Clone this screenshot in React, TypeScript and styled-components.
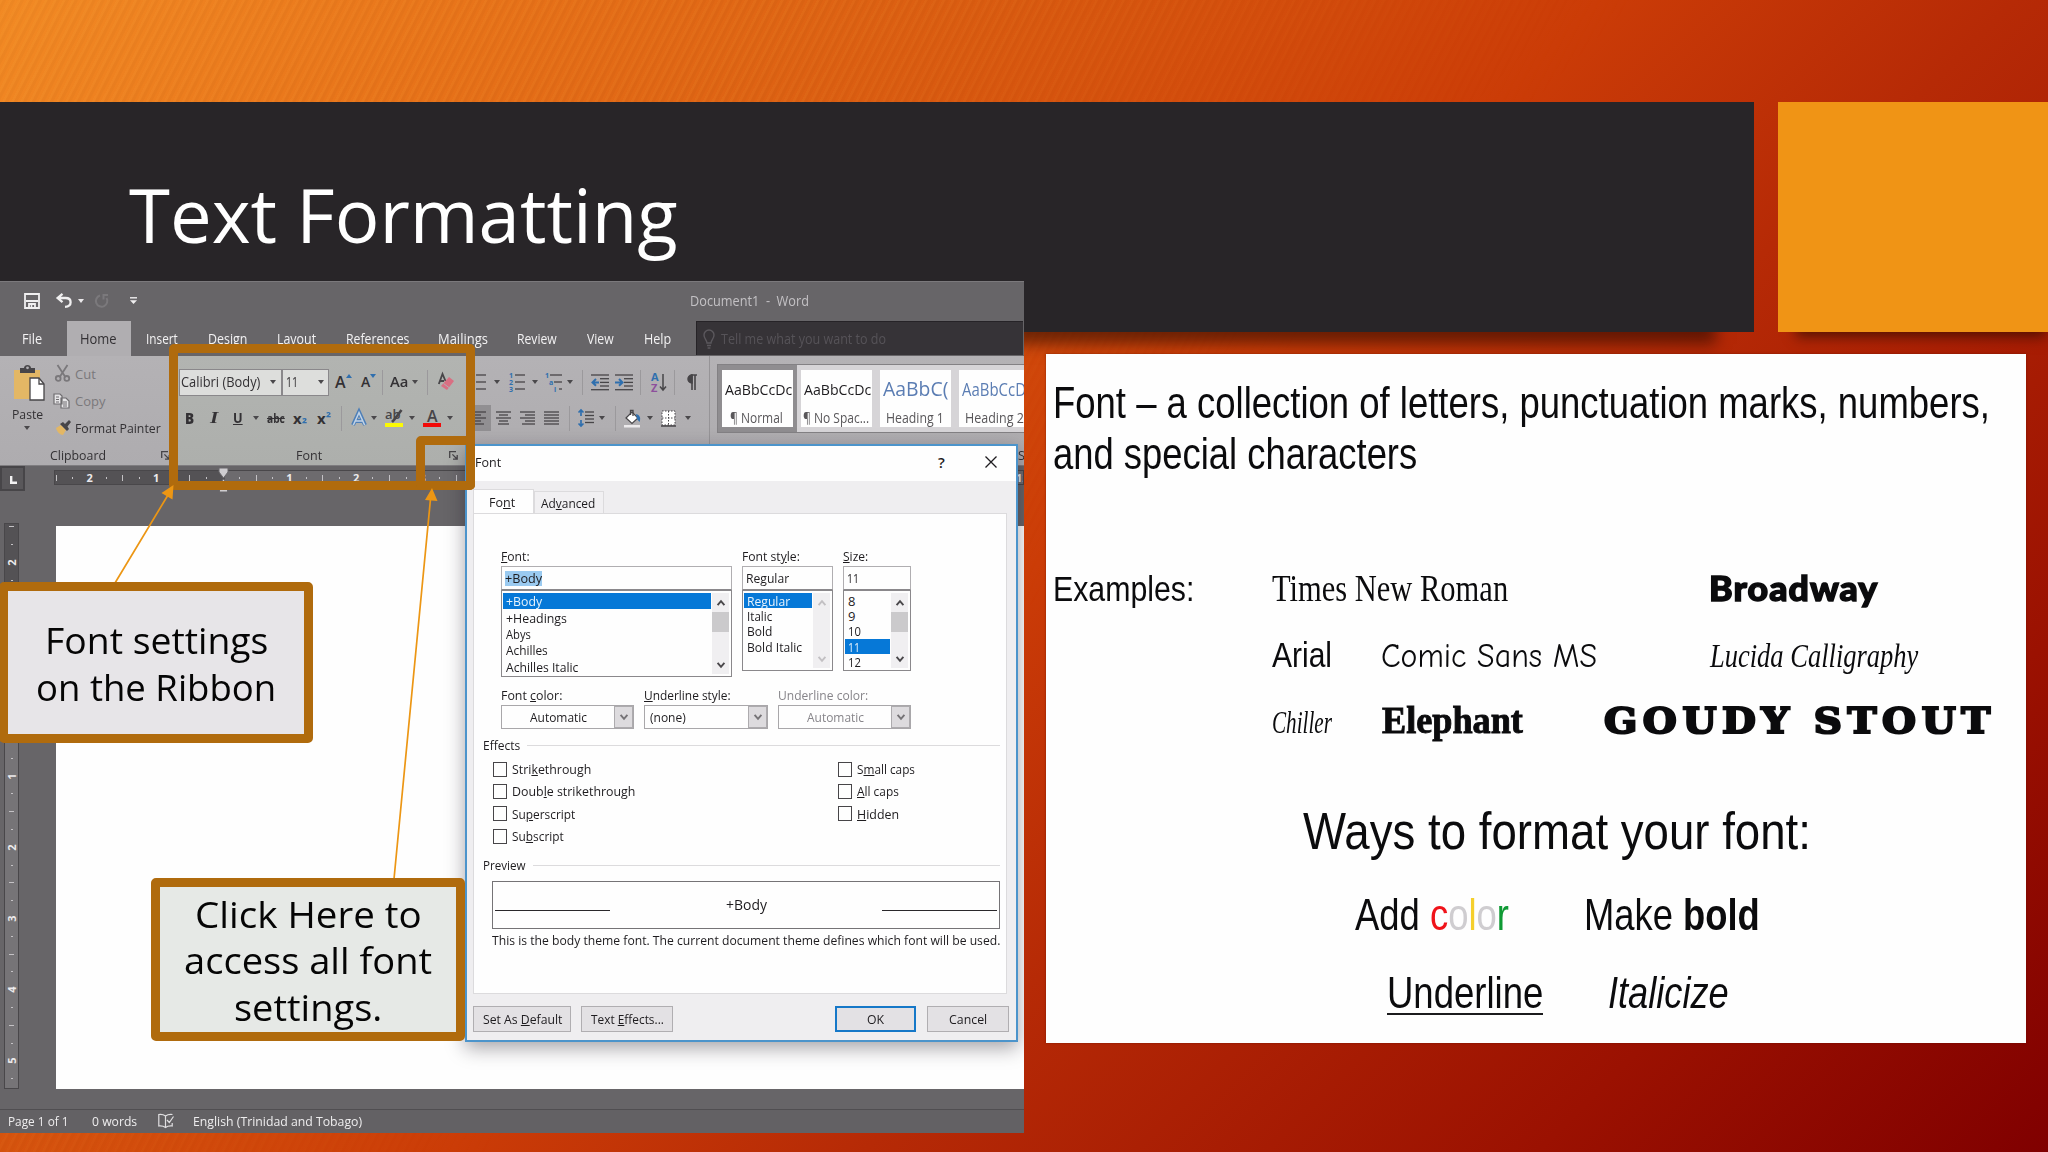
import React, { useLayoutEffect, useRef, useState } from 'react';
import styled, { createGlobalStyle, css } from 'styled-components';

const ui = `"Open Sans", "Noto Sans", sans-serif`;
const arial = `"Liberation Sans", Arial, sans-serif`;

const Global = createGlobalStyle`
  *, *::before, *::after { box-sizing: border-box; }
  body { margin: 0; font-family: ${ui}; }
  svg { display: block; flex: none; overflow: visible; }
`;

/* ---------- text set to an exact measure ---------- */

const Measure = styled.span<{ $w: number; $ml?: number; $c?: string; $fs?: number; $ff?: string; $b?: number; $i?: boolean; $lh?: number }>`
  display: block;
  flex: none;
  width: ${p => p.$w}px;
  margin-left: ${p => p.$ml ?? 0}px;
  white-space: pre;
  ${p => p.$c && css`color: ${p.$c};`}
  ${p => p.$fs && css`font-size: ${p.$fs}px;`}
  ${p => p.$ff && css`font-family: ${p.$ff};`}
  ${p => p.$b && css`font-weight: ${p.$b};`}
  ${p => p.$i && css`font-style: italic;`}
  ${p => p.$lh && css`line-height: ${p.$lh}px;`}
`;
const Run = styled.span`
  display: inline-block;
  transform-origin: 0 50%;
`;

type FitProps = { w: number; ml?: number; c?: string; fs?: number; ff?: string; b?: number; i?: boolean; lh?: number; children: React.ReactNode };

function Fit({ w, ml, c, fs, ff, b, i, lh, children }: FitProps) {
  const ref = useRef<HTMLSpanElement>(null);
  const [scale, setScale] = useState(1);
  useLayoutEffect(() => {
    if (ref.current) setScale(w / ref.current.offsetWidth);
  }, [w]);
  return (
    <Measure $w={w} $ml={ml} $c={c} $fs={fs} $ff={ff} $b={b} $i={i} $lh={lh}>
      <Run ref={ref} style={{ transform: `scaleX(${scale})` }}>{children}</Run>
    </Measure>
  );
}

/* ---------- slide ---------- */

const Slide = styled.div`
  position: relative;
  isolation: isolate;
  width: 2048px;
  height: 1152px;
  padding-top: 102px;
  overflow: hidden;
  display: flex;
  flex-direction: column;
  background: linear-gradient(135deg, #f28a24 0%, #e77219 16%, #d95a10 32%, #cb3c07 50%, #b62a06 63%, #9b1101 84%, #800000 100%);
  &::before {
    content: '';
    position: absolute;
    inset: 0;
    z-index: -1;
    background: repeating-linear-gradient(117deg, rgba(255, 200, 90, 0.06) 0 2px, rgba(0, 0, 0, 0.02) 3px 5px, transparent 6px 8px);
    mask-image: linear-gradient(135deg, #000 25%, transparent 52%);
  }
`;
const Header = styled.header`
  display: flex;
  gap: 24px;
  height: 230px;
  flex: none;
`;
const TitleBand = styled.div`
  width: 1754px;
  padding: 67px 0 0 129px;
  background: #282528;
  color: #fff;
  box-shadow: -24px 26px 14px -14px rgba(30, 8, 0, 0.55);
`;
const Accent = styled.div`
  flex: 1;
  background: #f09415;
  box-shadow: 8px 15px 12px -10px rgba(30, 8, 0, 0.6);
`;
const Body = styled.main`
  display: flex;
  align-items: flex-start;
`;

/* ---------- word window ---------- */

const Word = styled.section`
  position: relative;
  width: 1024px;
  height: 852px;
  margin-top: -51px;
  flex: none;
  display: flex;
  flex-direction: column;
  overflow: hidden;
  background: #676568;
  font-size: 13px;
  font-weight: 500;
  line-height: 18px;
  color: #333134;
`;
const TitleBar = styled.div`
  height: 40px;
  display: flex;
  align-items: center;
  padding: 0 0 2px 24px;
  border-top: 1px solid #7b797c;
  font-size: 14px;
  font-weight: 400;
`;
const Tabs = styled.nav`
  height: 35px;
  display: flex;
  align-items: center;
  font-size: 14px;
  color: #f3f2f3;
`;
const HomeTab = styled.div`
  width: 64px;
  height: 35px;
  margin-left: 25px;
  display: flex;
  align-items: center;
  background: #b0aeb1;
  color: #333134;
`;
const Search = styled.div`
  width: 327px;
  height: 34px;
  margin-left: 25px;
  align-self: flex-start;
  display: flex;
  align-items: center;
  padding-left: 6px;
  background: #363337;
  border: solid #262327;
  border-width: 1px 0 0 1px;
  color: #565358;
`;
const Ribbon = styled.div`
  height: 109px;
  display: flex;
  background: linear-gradient(#b4b2b5, #aeacaf);
`;
const Group = styled.div<{ $w: number }>`
  width: ${p => p.$w}px;
  flex: none;
  display: flex;
  flex-direction: column;
`;
const FontGroup = styled(Group)`
  background: linear-gradient(#b2b4b1, #adafac);
`;
const Tools = styled.div<{ $first?: boolean }>`
  height: 36px;
  display: flex;
  align-items: center;
  margin-top: ${p => (p.$first ? 8 : 0)}px;
`;
const GroupLabel = styled.div`
  height: 20px;
  margin-top: auto;
  display: flex;
  align-items: center;
`;
const ClipboardBody = styled.div`
  display: flex;
  padding-top: 4px;
`;
const PasteColumn = styled.div`
  width: 53px;
  display: flex;
  flex-direction: column;
  padding: 5px 0 0 12px;
  gap: 3px;
`;
const ClipRow = styled.div`
  display: flex;
  align-items: center;
  height: 27px;
`;
const Combo = styled.div<{ $w: number }>`
  width: ${p => p.$w}px;
  height: 27px;
  display: flex;
  align-items: center;
  border: 1px solid #8a888b;
  background: #dddedc;
  font-size: 14px;
`;
const Sep = styled.i<{ $ml: number }>`
  width: 1px;
  height: 25px;
  margin-left: ${p => p.$ml}px;
  background: #9b999c;
`;
const Caret = styled.i<{ $ml: number; $c?: string }>`
  width: 0;
  height: 0;
  flex: none;
  margin-left: ${p => p.$ml}px;
  border: solid transparent;
  border-width: 4px 3px 0;
  border-top-color: ${p => p.$c ?? '#4a484b'};
`;
const Pic = styled.span<{ $ml?: number; $bg?: boolean }>`
  display: flex;
  flex: none;
  margin-left: ${p => p.$ml ?? 0}px;
  ${p => p.$bg && css`background: #918f92; padding: 5px 4px 5px 2px;`}
`;
const StylesGroup = styled(Group)`
  border-left: 1px solid #969497;
  padding: 8px 0 0 7px;
  overflow: hidden;
`;
const Gallery = styled.div`
  display: flex;
  width: 320px;
  height: 69px;
  border: 1px solid #838184;
  border-right: 0;
  background: #d6d4d7;
`;
const StyleTile = styled.div<{ $on?: boolean }>`
  width: 79px;
  height: 67px;
  flex: none;
  padding: 5px 4px;
  background: ${p => (p.$on ? '#8f8d90' : 'transparent')};
`;
const TileFace = styled.div`
  height: 57px;
  display: flex;
  flex-direction: column;
  background: #fefefe;
  overflow: hidden;
`;

const RulerRow = styled.div`
  height: 26px;
  display: flex;
  flex: none;
  border-top: 1px solid #7f7d80;
`;
const Corner = styled.div`
  width: 25px;
  height: 25px;
  padding: 8px 0 0 8px;
  background: #59575a;
  border: 2px solid #474548;
`;
const HRuler = styled.div`
  width: 970px;
  height: 15px;
  margin: 4px 0 0 29px;
  display: flex;
  overflow: hidden;
  border: 1px solid #49474a;
  background: linear-gradient(90deg, #545255 170px, #6d6b6e 170px);
`;
const VRuler = styled.div`
  width: 15px;
  height: 566px;
  margin: 32px 37px 0 4px;
  overflow: hidden;
  border: 1px solid #49474a;
  background: linear-gradient(#545255 182px, #767477 182px);
`;
const Cell = styled.div<{ $v?: boolean; $lead?: boolean }>`
  flex: none;
  display: flex;
  align-items: center;
  justify-content: center;
  font: bold 11px/13px ${ui};
  color: #eceaec;
  ${p => (p.$v
    ? css`height: 17.8px; width: 13px; margin-top: ${p.$lead ? -6 : 0}px;`
    : css`width: 16.67px; height: 13px; margin-left: ${p.$lead ? -7 : 0}px;`)}
`;
const Turn = styled.span`
  transform: rotate(-90deg);
`;
const Tick = styled.i<{ $v?: boolean; $long?: boolean }>`
  background: #c4c2c5;
  width: ${p => (p.$v ? (p.$long ? 5 : 2) : 1)}px;
  height: ${p => (p.$v ? 1 : p.$long ? 6 : 2)}px;
`;
const Workspace = styled.div`
  flex: 1;
  display: flex;
`;
const Page = styled.div`
  width: 968px;
  height: 563px;
  margin-top: 35px;
  background: #fefefe;
`;
const StatusBar = styled.footer`
  height: 24px;
  flex: none;
  display: flex;
  align-items: center;
  padding: 0 0 2px 8px;
  border-top: 1px solid #504e51;
  background: #636164;
  color: #eeedee;
`;

/* ---------- font dialog ---------- */

const Dialog = styled.div`
  position: absolute;
  left: 465px;
  top: 163px;
  width: 553px;
  height: 598px;
  display: flex;
  flex-direction: column;
  border: 2px solid #4c94cb;
  background: #efeef0;
  box-shadow: 0 6px 18px rgba(20, 15, 30, 0.38);
  color: #1e1c1f;
  font-size: 13px;
`;
const DialogTitle = styled.div`
  height: 35px;
  display: flex;
  align-items: center;
  padding-bottom: 3px;
  background: #fefefe;
`;
const DialogTabs = styled.div`
  display: flex;
  align-items: flex-end;
  height: 32px;
  padding: 8px 0 0 6px;
`;
const DialogTab = styled.div<{ $on?: boolean; $w: number }>`
  width: ${p => p.$w}px;
  height: ${p => (p.$on ? 25 : 22)}px;
  margin-bottom: ${p => (p.$on ? -1 : 0)}px;
  display: flex;
  align-items: center;
  border: 1px solid #dcdbdd;
  border-bottom: 0;
  background: ${p => (p.$on ? '#fefefe' : '#f1f0f2')};
`;
const Panel = styled.div`
  width: 534px;
  height: 481px;
  margin-left: 6px;
  padding: 33px 6px 0 9px;
  display: flex;
  flex-direction: column;
  border: 1px solid #dcdbdd;
  background: #fefefe;
`;
const Fields = styled.div<{ $mt?: number }>`
  display: flex;
  align-items: flex-start;
  gap: 10px;
  margin: ${p => p.$mt ?? 0}px 0 0 18px;
`;
const Field = styled.div<{ $w: number; $dim?: boolean }>`
  width: ${p => p.$w}px;
  display: flex;
  flex-direction: column;
  color: ${p => (p.$dim ? '#87858a' : 'inherit')};
`;
const Entry = styled.div`
  height: 24px;
  margin-top: 1px;
  padding-left: 3px;
  display: flex;
  align-items: center;
  border: 1px solid #b0aeb1;
  border-bottom-color: #8a888b;
`;
const Selected = styled.span`
  height: 15px;
  display: flex;
  align-items: center;
  background: #9acaf0;
`;
const List = styled.div<{ $h: number }>`
  height: ${p => p.$h}px;
  display: flex;
  justify-content: space-between;
  padding: 2px 2px 2px 1px;
  border: 1px solid #8a888b;
`;
const Options = styled.div`
  flex: 1;
`;
const Option = styled.div<{ $h: number; $on?: boolean }>`
  height: ${p => p.$h}px;
  display: flex;
  align-items: center;
  padding-left: 3px;
  background: ${p => (p.$on ? '#0678d7' : 'transparent')};
  color: ${p => (p.$on ? '#e8f3fc' : 'inherit')};
`;
const Scroll = styled.div`
  width: 17px;
  margin-left: 1px;
  display: flex;
  flex-direction: column;
  align-items: center;
  justify-content: space-between;
  background: #f0eff1;
  padding: 7px 0 6px;
`;
const Thumb = styled.i`
  width: 17px;
  height: 20px;
  margin: 6px 0 auto;
  background: #cbcacc;
`;
const Drop = styled.div`
  height: 24px;
  margin-top: 1px;
  display: flex;
  align-items: center;
  justify-content: space-between;
  border: 1px solid #a9a7aa;
`;
const DropButton = styled.span`
  width: 19px;
  height: 22px;
  display: flex;
  align-items: center;
  justify-content: center;
  border: 1px solid #adabae;
  background: #dddbde;
`;
const Legend = styled.div<{ $mt: number }>`
  display: flex;
  align-items: center;
  gap: 7px;
  margin-top: ${p => p.$mt}px;
  &::after {
    content: '';
    flex: 1;
    height: 1px;
    background: #dcdbdd;
  }
`;
const Checks = styled.div`
  display: grid;
  grid-template-columns: 345px 1fr;
  grid-auto-rows: 22.3px;
  margin: 4px 0 0 10px;
`;
const Check = styled.label<{ $col: number; $row: number }>`
  grid-column: ${p => p.$col};
  grid-row: ${p => p.$row};
  display: flex;
  align-items: center;
  gap: 5px;
  &::before {
    content: '';
    width: 14px;
    height: 15px;
    border: 1px solid #474548;
  }
`;
const PreviewBox = styled.div`
  height: 48px;
  margin: 7px 0 2px 9px;
  padding: 0 2px 2px;
  display: flex;
  align-items: center;
  justify-content: space-between;
  border: 1px solid #757376;
`;
const Rule = styled.i`
  width: 115px;
  height: 1px;
  margin-top: 13px;
  background: #2a282b;
`;
const Buttons = styled.div`
  display: flex;
  margin: 12px 0 0 6px;
`;
const Button = styled.button<{ $w: number; $ml?: number; $primary?: boolean }>`
  width: ${p => p.$w}px;
  height: 26px;
  margin: 0 0 0 ${p => p.$ml ?? 0}px;
  padding: 0;
  display: flex;
  align-items: center;
  justify-content: center;
  border: ${p => (p.$primary ? '2px solid #1678c8' : '1px solid #b0aeb1')};
  background: #e3e1e4;
  font: 500 13px/18px ${ui};
  color: #1e1c1f;
`;

/* ---------- annotations over the window ---------- */

const Frame = styled.div<{ $x: number; $y: number; $w: number; $h: number }>`
  position: absolute;
  left: ${p => p.$x}px;
  top: ${p => p.$y}px;
  width: ${p => p.$w}px;
  height: ${p => p.$h}px;
  border: 9px solid #b06b0d;
  border-radius: 5px;
`;
const Callout = styled(Frame)<{ $bg: string }>`
  display: flex;
  flex-direction: column;
  align-items: center;
  justify-content: center;
  padding-top: 2px;
  background: ${p => p.$bg};
  background-clip: padding-box;
  color: #050505;
  font-size: 37px;
  line-height: 46.4px;
`;
const Arrows = styled.svg`
  position: absolute;
  left: 0;
  top: 0;
`;

/* ---------- example card ---------- */

const Card = styled.section`
  width: 980px;
  height: 689px;
  margin: 22px 0 0 22px;
  padding: 23px 0 0 7px;
  background: #fefefe;
  color: #0b0b0d;
  font-family: ${arial};
  box-shadow: 0 0 2px rgba(90, 20, 0, 0.6);
`;
const Line = styled.div<{ $h: number; $fs: number; $mt?: number }>`
  height: ${p => p.$h}px;
  margin-top: ${p => p.$mt ?? 0}px;
  display: flex;
  align-items: baseline;
  font-size: ${p => p.$fs}px;
  &::before {
    content: '\\200b';
    width: 0;
    font: ${p => p.$fs}px/${p => p.$h}px ${arial};
  }
`;
const Ink = styled.span<{ $c: string }>`
  color: ${p => p.$c};
`;
const Underlined = styled.span`
  border-bottom: 2px solid #1b1b1d;
  display: inline-block;
  line-height: 41px;
`;
const Heavy = styled.span<{ $s: number; $ls?: number }>`
  -webkit-text-stroke: ${p => p.$s}px #0b0b0d;
  letter-spacing: ${p => p.$ls ?? 0}px;
`;

/* ---------- drawings ---------- */

const dark = '#474548';
const blue = '#2f6fae';

const Chevron = ({ up, c = '#4a484b', s = 8 }: { up?: boolean; c?: string; s?: number }) => (
  <svg width={s} height={6} viewBox="0 0 8 6">
    <path d={up ? 'M.6 5.2L4 1.2L7.4 5.2' : 'M.6 .8L4 4.8L7.4 .8'} fill="none" stroke={c} strokeWidth="1.9" />
  </svg>
);
const Launcher = () => (
  <svg width="9" height="9" viewBox="0 0 9 9" fill="none" stroke={dark} strokeWidth="1.3">
    <path d="M.7 7V.7H7M3.4 3.4L8 8M8.2 4V8.2H4" />
  </svg>
);
const lines = (rows: number[][]) => rows.map(([a, b, y]) => <path key={y} d={`M${a} ${y}H${b}`} stroke={dark} strokeWidth="1.3" />);
const Align = ({ rows }: { rows: number[][] }) => <svg width="15" height="16" viewBox="0 0 15 16">{lines(rows)}</svg>;

const hMarks = Array.from({ length: 59 }, (_, k) => k - 10);
const vMarks = Array.from({ length: 32 }, (_, k) => k - 10);

function Mark({ k, v }: { k: number; v?: boolean }) {
  if (k === 0) return null;
  if (k % 4 === 0) return v ? <Turn>{Math.abs(k / 4)}</Turn> : <>{Math.abs(k / 4)}</>;
  return <Tick $v={v} $long={k % 2 === 0} />;
}

const H = ({ children }: { children: React.ReactNode }) => <u>{children}</u>;

export default function App() {
  return (
    <Slide>
      <Global />
      <Header>
        <TitleBand><Fit w={549} fs={75} b={500} lh={90}>Text Formatting</Fit></TitleBand>
        <Accent />
      </Header>
      <Body>
        <Word>
          <TitleBar>
            <svg width="16" height="16" viewBox="0 0 16 16" fill="none" stroke="#f0eff0" strokeWidth="1.8">
              <path d="M1 1H15V15H1ZM2 8H14M5 15V11H11V15" /><path d="M7.5 12V15" strokeWidth="1.6" />
            </svg>
            <Pic $ml={16}>
              <svg width="16" height="15" viewBox="0 0 16 15" fill="none" stroke="#f0eff0" strokeWidth="2.3">
                <path d="M6.5 .8L1.6 5L6.5 9.2M2 5H9.5C13 5 14.6 7 14.6 9.2C14.6 12 12.5 13.6 9 13.8" />
              </svg>
            </Pic>
            <Caret $ml={6} $c="#eceaec" />
            <Pic $ml={11}>
              <svg width="14" height="14" viewBox="0 0 14 14" fill="none" stroke="#7b797c" strokeWidth="2">
                <path d="M5 1.5A5.7 5.7 0 1 0 11.5 4M13 1H8.5V5.5" />
              </svg>
            </Pic>
            <Pic $ml={21}>
              <svg width="7" height="8" viewBox="0 0 7 8"><path d="M0 .8H7" stroke="#f0eff0" strokeWidth="1.4" /><path d="M0 3.2H7L3.5 7Z" fill="#f0eff0" /></svg>
            </Pic>
            <Fit w={119} ml={553} c="#c3c1c4">{'Document1  -  Word'}</Fit>
          </TitleBar>
          <Tabs>
            <Fit w={20} ml={22}>File</Fit>
            <HomeTab><Fit w={37} ml={13}>Home</Fit></HomeTab>
            <Fit w={32} ml={15}>Insert</Fit>
            <Fit w={39} ml={30}>Design</Fit>
            <Fit w={39} ml={30}>Layout</Fit>
            <Fit w={63} ml={30}>References</Fit>
            <Fit w={50} ml={29}>Mailings</Fit>
            <Fit w={40} ml={29}>Review</Fit>
            <Fit w={27} ml={30}>View</Fit>
            <Fit w={27} ml={30}>Help</Fit>
            <Search>
              <svg width="12" height="20" viewBox="0 0 12 20" fill="none" stroke="#5b585d" strokeWidth="1.4">
                <path d="M4 14C4 11 1 10 1 6A5 5 0 0 1 11 6C11 10 8 11 8 14ZM4 16.5H8M4.6 19H7.4" />
              </svg>
              <Fit w={165} ml={6}>Tell me what you want to do</Fit>
            </Search>
          </Tabs>
          <Ribbon>
            <Group $w={174}>
              <ClipboardBody>
                <PasteColumn>
                  <svg width="33" height="37" viewBox="0 0 33 37">
                    <path d="M2 5H28V34H2Z" fill="#e3b765" />
                    <path d="M8 3H12C12-1 19-1 19 3H23V8H8Z" fill={dark} /><circle cx="15.5" cy="2.8" r="1.4" fill="#b0aeb1" />
                    <path d="M18 13H27L32 19V35H18Z" fill="#fff" stroke={dark} strokeWidth="1.3" /><path d="M27 13V19H32" fill="none" stroke={dark} strokeWidth="1.3" />
                  </svg>
                  <Fit w={31}>Paste</Fit>
                  <Caret $ml={12} />
                </PasteColumn>
                <div>
                  <ClipRow>
                    <Pic $ml={2}><svg width="15" height="17" viewBox="0 0 15 17" fill="none" stroke="#7a787b" strokeWidth="1.8">
                      <path d="M2.5 0L10 11.5M12.5 0L5 11.5" /><circle cx="3.2" cy="13.4" r="2.4" /><circle cx="11.8" cy="13.4" r="2.4" />
                    </svg></Pic>
                    <Fit w={21} ml={5} c="#7a787b">Cut</Fit>
                  </ClipRow>
                  <ClipRow>
                    <svg width="17" height="16" viewBox="0 0 17 16" fill="#e6e5e7" stroke="#6f6d70" strokeWidth="1.2">
                      <path d="M1 1H7L9 3V11H1ZM8 5H13L16 8V15H8Z" /><path d="M3 4H6M3 6.5H6M3 9H6M10 9H14M10 11H14M10 13H14" />
                    </svg>
                    <Fit w={30} ml={5} c="#7a787b">Copy</Fit>
                  </ClipRow>
                  <ClipRow>
                    <Pic $ml={3}><svg width="16" height="16" viewBox="0 0 16 16">
                      <path d="M0 8L5 5L10 10L7 15C4 15 1 12 0 8Z" fill="#e3b765" /><path d="M4 4L7 2L9 4L13 0L15 2L11.5 6.5L13 9L11 11Z" fill={dark} />
                    </svg></Pic>
                    <Fit w={86} ml={3}>Format Painter</Fit>
                  </ClipRow>
                </div>
              </ClipboardBody>
              <GroupLabel><Fit w={56} ml={50}>Clipboard</Fit><Pic $ml={55}><Launcher /></Pic></GroupLabel>
            </Group>

            <FontGroup $w={291}>
              <Tools $first>
                <Pic $ml={5}><Combo $w={103}><Fit w={79} ml={1}>Calibri (Body)</Fit><Caret $ml={10} /></Combo></Pic>
                <Combo $w={47}><Fit w={12} ml={3}>11</Fit><Caret $ml={20} /></Combo>
                <Fit w={11} ml={6} fs={16} b={600}>A</Fit>
                <svg width="6" height="20" viewBox="0 0 6 20"><path d="M0 6L3 2L6 6Z" fill={blue} /></svg>
                <Fit w={9} ml={9} fs={14} b={600} lh={24}>A</Fit>
                <svg width="6" height="20" viewBox="0 0 6 20"><path d="M0 2H6L3 6Z" fill={blue} /></svg>
                <Sep $ml={6} />
                <Fit w={18} ml={7} fs={14} b={600}>Aa</Fit>
                <Caret $ml={4} />
                <Sep $ml={9} />
                <Pic $ml={10}><svg width="17" height="19" viewBox="0 0 17 19">
                  <path d="M.8 11L4.5 1L7.5 8M2 8H6" fill="none" stroke={dark} strokeWidth="1.8" /><path d="M3 13L11 4L16 8L9 17Z" fill="#d96f83" /><path d="M5.5 10.5L11.5 15" stroke="#b0aeb1" />
                </svg></Pic>
              </Tools>
              <Tools>
                <Fit w={9} ml={11} fs={15} b={800}>B</Fit>
                <Fit w={8} ml={16} fs={16} b={700} i ff={`"Liberation Serif", serif`}>I</Fit>
                <Fit w={10} ml={15} fs={14} b={700}><H>U</H></Fit>
                <Caret $ml={10} />
                <Fit w={18} ml={8} fs={13} b={700}><s>abc</s></Fit>
                <Fit w={9} ml={8} fs={15} b={700}>x</Fit>
                <Fit w={5} fs={11} c={blue} b={700} lh={24}>{'\u2082'}</Fit>
                <Fit w={9} ml={10} fs={15} b={700}>x</Fit>
                <Fit w={5} fs={11} c={blue} b={700} lh={10}>{'\u00b2'}</Fit>
                <Sep $ml={10} />
                <Pic $ml={9}><svg width="16" height="17" viewBox="0 0 16 17">
                  <path d="M2 15L8 2L14 15M4.5 11H11.5" fill="none" stroke="#4d7fb8" strokeWidth="4" /><path d="M2.4 15L8 2.6L13.6 15M4.5 11H11.5" fill="none" stroke="#c3d4e6" strokeWidth="1.5" />
                </svg></Pic>
                <Caret $ml={4} />
                <Pic $ml={8}><svg width="18" height="20" viewBox="0 0 18 20">
                  <text x="0" y="11" fontSize="13" fontWeight="600" fill={dark}>ab</text><path d="M16.5 2L9 12L7 14" stroke={dark} strokeWidth="2.6" /><path d="M0 15H18V19H0Z" fill="#fbf905" />
                </svg></Pic>
                <Caret $ml={6} />
                <Pic $ml={8}><svg width="18" height="20" viewBox="0 0 18 20">
                  <text x="4" y="13.5" fontSize="16" fontWeight="600" fill={dark}>A</text><path d="M0 15H18V19H0Z" fill="#f20a08" />
                </svg></Pic>
                <Caret $ml={6} />
              </Tools>
              <GroupLabel><Fit w={26} ml={122}>Font</Fit><Pic $ml={127}><Launcher /></Pic></GroupLabel>
            </FontGroup>

            <Group $w={244}>
              <Tools $first>
                <Pic $ml={7}><Align rows={[[4, 14, 1], [4, 14, 8], [4, 14, 15]]} /></Pic>
                <Caret $ml={7} />
                <Pic $ml={9}><svg width="16" height="18" viewBox="0 0 16 18">{lines([[6, 16, 2], [6, 16, 9], [6, 16, 16]])}<g fill={blue} fontSize="7" fontWeight="700"><text y="5">1</text><text y="12">2</text><text y="19">3</text></g></svg></Pic>
                <Caret $ml={7} />
                <Pic $ml={7}><svg width="18" height="18" viewBox="0 0 18 18">{lines([[5, 17, 2], [9, 17, 9], [14, 17, 16]])}<g fill={blue} fontSize="7" fontWeight="700"><text y="5">1</text><text x="4" y="12">a</text><text x="9" y="19">i</text></g></svg></Pic>
                <Caret $ml={4} />
                <Sep $ml={9} />
                <Pic $ml={8}><svg width="18" height="17" viewBox="0 0 18 17">{lines([[0, 18, 1], [9, 18, 4.7], [9, 18, 8.4], [9, 18, 12], [0, 18, 15.7]])}<path d="M8 8.4H2M5 5L1.5 8.4L5 11.8" fill="none" stroke={blue} strokeWidth="2" /></svg></Pic>
                <Pic $ml={6}><svg width="18" height="17" viewBox="0 0 18 17">{lines([[0, 18, 1], [9, 18, 4.7], [9, 18, 8.4], [9, 18, 12], [0, 18, 15.7]])}<path d="M0 8.4H7M4 5L7.5 8.4L4 11.8" fill="none" stroke={blue} strokeWidth="2" /></svg></Pic>
                <Sep $ml={7} />
                <Pic $ml={10}><svg width="15" height="19" viewBox="0 0 15 19"><g fontSize="11" fontWeight="700"><text y="8" fill={blue}>A</text><text y="18.5" fill="#8d4f9c">Z</text></g><path d="M12 1V17M9 13.5L12 17L15 13.5" fill="none" stroke={dark} strokeWidth="1.5" /></svg></Pic>
                <Sep $ml={8} />
                <Pic $ml={11}><svg width="11" height="15" viewBox="0 0 11 15"><path d="M5 0H11M6 0V15M9 0V15" stroke={dark} strokeWidth="1.6" /><path d="M6 0A4 4 0 0 0 6 8Z" fill={dark} stroke={dark} strokeWidth="1.5" /></svg></Pic>
              </Tools>
              <Tools>
                <Pic $ml={5} $bg><Align rows={[[0, 14, 2], [0, 9, 5], [0, 14, 8], [0, 9, 11], [0, 12, 14]]} /></Pic>
                <Pic $ml={5}><Align rows={[[0, 15, 2], [3, 12, 5], [0, 15, 8], [3, 12, 11], [2, 13, 14]]} /></Pic>
                <Pic $ml={9}><Align rows={[[0, 15, 2], [5, 15, 5], [0, 15, 8], [5, 15, 11], [2, 15, 14]]} /></Pic>
                <Pic $ml={9}><Align rows={[[0, 15, 2], [0, 15, 5], [0, 15, 8], [0, 15, 11], [0, 15, 14]]} /></Pic>
                <Sep $ml={10} />
                <Pic $ml={8}><svg width="16" height="18" viewBox="0 0 16 18">{lines([[7, 16, 3], [7, 16, 6.5], [7, 16, 10], [7, 16, 13.5]])}<path d="M3 1V7M.5 3.5L3 1L5.5 3.5M3 11V17M.5 14.5L3 17L5.5 14.5" fill="none" stroke={blue} strokeWidth="1.7" /></svg></Pic>
                <Caret $ml={5} />
                <Sep $ml={10} />
                <Pic $ml={8}><svg width="17" height="19" viewBox="0 0 17 19"><path d="M2 9L8 3L14 9L8 14.5Z" fill="#fff" stroke={dark} strokeWidth="1.2" /><path d="M6.5 6V1.5H9V7" fill="none" stroke={dark} strokeWidth="1.3" /><path d="M12 5C16 6 17 9 15.5 13L13 10Z" fill={blue} /><path d="M0 16H16V18.5H0Z" fill="#eceaec" /></svg></Pic>
                <Caret $ml={6} />
                <Pic $ml={8}><svg width="15" height="17" viewBox="0 0 15 17"><path d="M1 1H14V15H1Z" fill="#fff" stroke={dark} strokeWidth="1" strokeDasharray="1.5 1.5" /><path d="M7.5 1V15M1 8H14" stroke={dark} strokeDasharray="1.5 1.5" /><path d="M0 16H15" stroke={dark} strokeWidth="1.5" /></svg></Pic>
                <Caret $ml={9} />
              </Tools>
            </Group>

            <StylesGroup $w={315}>
              <Gallery>
                <StyleTile $on><TileFace>
                  <Fit w={67} ml={3} fs={15} lh={38} c="#1e1c1f">AaBbCcDc</Fit><Fit w={53} ml={8} fs={14} lh={19} c="#59575a">¶ Normal</Fit>
                </TileFace></StyleTile>
                <StyleTile><TileFace>
                  <Fit w={67} ml={3} fs={15} lh={38} c="#1e1c1f">AaBbCcDc</Fit><Fit w={66} ml={2} fs={14} lh={19} c="#59575a">¶ No Spac...</Fit>
                </TileFace></StyleTile>
                <StyleTile><TileFace>
                  <Fit w={65} ml={3} fs={20} b={400} lh={38} c="#5b7db3">AaBbC(</Fit><Fit w={58} ml={6} fs={14} lh={19} c="#59575a">Heading 1</Fit>
                </TileFace></StyleTile>
                <StyleTile><TileFace>
                  <Fit w={64} ml={3} fs={18} b={400} lh={38} c="#5b7db3">AaBbCcD</Fit><Fit w={59} ml={6} fs={14} lh={19} c="#59575a">Heading 2</Fit>
                </TileFace></StyleTile>
              </Gallery>
              <GroupLabel><Fit w={34} ml={301}>Styles</Fit></GroupLabel>
            </StylesGroup>
          </Ribbon>

          <RulerRow>
            <Corner><svg width="7" height="8" viewBox="0 0 7 8"><path d="M1.2 0V6.8H7" fill="none" stroke="#f3f2f3" strokeWidth="2.4" /></svg></Corner>
            <HRuler>{hMarks.map((k, i) => <Cell key={k} $lead={i === 0}><Mark k={k} /></Cell>)}</HRuler>
          </RulerRow>
          <Workspace>
            <VRuler>{vMarks.map((k, i) => <Cell key={k} $v $lead={i === 0}><Mark k={k} v /></Cell>)}</VRuler>
            <Page />
          </Workspace>
          <StatusBar>
            <Fit w={61}>Page 1 of 1</Fit>
            <Fit w={45} ml={23}>0 words</Fit>
            <Pic $ml={21}><svg width="16" height="16" viewBox="0 0 16 16" fill="none" stroke="#e0dfe1" strokeWidth="1.2"><path d="M7.5 3C5.5 1.5 3 1.2 .8 1.5V13C3 12.8 5.5 13 7.5 14.5C9.5 13 12 12.8 14.2 13V10M7.5 3V14.5M7.5 3C9.5 1.5 12 1.2 14.5 1.5M9 7L11.3 9.5L15.5 3.5" /></svg></Pic>
            <Fit w={169} ml={19}>English (Trinidad and Tobago)</Fit>
          </StatusBar>

          <Arrows width="1024" height="240" viewBox="0 0 1024 240">
            <path d="M219 187H228V191L223.5 197L219 191ZM219.5 211V203L223.5 198L227.5 203V211Z" fill="#cfcdd0" stroke="#6b696c" />
          </Arrows>

          <Dialog>
            <DialogTitle>
              <Fit w={26} ml={8}>Font</Fit>
              <Fit w={7} ml={437} fs={15} b={600}>?</Fit>
              <Pic $ml={40}><svg width="12" height="12" viewBox="0 0 12 12"><path d="M.5 .5L11.5 11.5M11.5 .5L.5 11.5" stroke="#1e1c1f" strokeWidth="1.3" /></svg></Pic>
            </DialogTitle>
            <DialogTabs>
              <DialogTab $on $w={61}><Fit w={26} ml={15}>Fo<H>n</H>t</Fit></DialogTab>
              <DialogTab $w={70}><Fit w={54} ml={6}>Ad<H>v</H>anced</Fit></DialogTab>
            </DialogTabs>
            <Panel>
              <Fields>
                <Field $w={231}>
                  <Fit w={29}><H>F</H>ont:</Fit>
                  <Entry><Selected><Fit w={37}>+Body</Fit></Selected></Entry>
                  <List $h={87}>
                    <Options>
                      <Option $h={16.4} $on><Fit w={36}>+Body</Fit></Option>
                      <Option $h={16.4}><Fit w={61}>+Headings</Fit></Option>
                      <Option $h={16.4}><Fit w={25}>Abys</Fit></Option>
                      <Option $h={16.4}><Fit w={42}>Achilles</Fit></Option>
                      <Option $h={16.4}><Fit w={72}>Achilles Italic</Fit></Option>
                    </Options>
                    <Scroll><Chevron up /><Thumb /><Chevron /></Scroll>
                  </List>
                </Field>
                <Field $w={91}>
                  <Fit w={58}>Font st<H>y</H>le:</Fit>
                  <Entry><Fit w={43}>Regular</Fit></Entry>
                  <List $h={81}>
                    <Options>
                      <Option $h={15.3} $on><Fit w={43}>Regular</Fit></Option>
                      <Option $h={15.3}><Fit w={25}>Italic</Fit></Option>
                      <Option $h={15.3}><Fit w={25}>Bold</Fit></Option>
                      <Option $h={15.3}><Fit w={55}>Bold Italic</Fit></Option>
                    </Options>
                    <Scroll><Chevron up c="#c2c0c3" /><Chevron c="#c2c0c3" /></Scroll>
                  </List>
                </Field>
                <Field $w={68}>
                  <Fit w={25}><H>S</H>ize:</Fit>
                  <Entry><Fit w={12}>11</Fit></Entry>
                  <List $h={81}>
                    <Options>
                      <Option $h={15.3}><Fit w={7}>8</Fit></Option>
                      <Option $h={15.3}><Fit w={7}>9</Fit></Option>
                      <Option $h={15.3}><Fit w={13}>10</Fit></Option>
                      <Option $h={15.3} $on><Fit w={12}>11</Fit></Option>
                      <Option $h={15.3}><Fit w={13}>12</Fit></Option>
                    </Options>
                    <Scroll><Chevron up /><Thumb /><Chevron /></Scroll>
                  </List>
                </Field>
              </Fields>
              <Fields $mt={9}>
                <Field $w={133}>
                  <Fit w={61}>Font <H>c</H>olor:</Fit>
                  <Drop><Fit w={57} ml={28}>Automatic</Fit><DropButton><Chevron c="#757376" s={10} /></DropButton></Drop>
                </Field>
                <Field $w={124}>
                  <Fit w={87}><H>U</H>nderline style:</Fit>
                  <Drop><Fit w={36} ml={5}>(none)</Fit><DropButton><Chevron c="#757376" s={10} /></DropButton></Drop>
                </Field>
                <Field $w={133} $dim>
                  <Fit w={90}>Underline color:</Fit>
                  <Drop><Fit w={57} ml={28}>Automatic</Fit><DropButton><Chevron c="#757376" s={10} /></DropButton></Drop>
                </Field>
              </Fields>
              <Legend $mt={7}><Fit w={37}>Effects</Fit></Legend>
              <Checks>
                <Check $col={1} $row={1}><Fit w={79}>Stri<H>k</H>ethrough</Fit></Check>
                <Check $col={1} $row={2}><Fit w={123}>Doub<H>l</H>e strikethrough</Fit></Check>
                <Check $col={1} $row={3}><Fit w={63}>Su<H>p</H>erscript</Fit></Check>
                <Check $col={1} $row={4}><Fit w={52}>Su<H>b</H>script</Fit></Check>
                <Check $col={2} $row={1}><Fit w={58}>S<H>m</H>all caps</Fit></Check>
                <Check $col={2} $row={2}><Fit w={42}><H>A</H>ll caps</Fit></Check>
                <Check $col={2} $row={3}><Fit w={42}><H>H</H>idden</Fit></Check>
              </Checks>
              <Legend $mt={9}><Fit w={43}>Preview</Fit></Legend>
              <PreviewBox><Rule /><Fit w={41} fs={15}>+Body</Fit><Rule /></PreviewBox>
              <Fit w={508} ml={9}>This is the body theme font. The current document theme defines which font will be used.</Fit>
            </Panel>
            <Buttons>
              <Button $w={98}><Fit w={79}>Set As <H>D</H>efault</Fit></Button>
              <Button $w={92} $ml={10}><Fit w={73}>Text <H>E</H>ffects...</Fit></Button>
              <Button $w={81} $ml={162} $primary><Fit w={17}>OK</Fit></Button>
              <Button $w={82} $ml={11}><Fit w={38}>Cancel</Fit></Button>
            </Buttons>
          </Dialog>

          <Frame $x={169} $y={63} $w={306} $h={146} />
          <Frame $x={416} $y={155} $w={59} $h={54} />
          <Arrows width="500" height="620" viewBox="0 0 500 620">
            <path d="M115 302L168 214M394 598L430.5 218" stroke="#ec9614" strokeWidth="1.7" />
            <path d="M173.5 204L172.5 218.5L161.5 212ZM432 207L437.5 220L425 219Z" fill="#ec9614" />
          </Arrows>
          <Callout $x={-1} $y={301} $w={314} $h={161} $bg="#e7e5e8">
            <Fit w={223}>Font settings</Fit>
            <Fit w={240}>on the Ribbon</Fit>
          </Callout>
          <Callout $x={151} $y={597} $w={314} $h={163} $bg="#e6e9e6">
            <Fit w={227}>Click Here to</Fit>
            <Fit w={248}>access all font</Fit>
            <Fit w={148}>settings.</Fit>
          </Callout>
        </Word>

        <Card>
          <Line $h={51} $fs={44}><Fit w={937}>Font – a collection of letters, punctuation marks, numbers,</Fit></Line>
          <Line $h={51} $fs={44}><Fit w={364}>and special characters</Fit></Line>
          <Line $h={66} $fs={35} $mt={77}>
            <Fit w={141}>Examples:</Fit>
            <Fit w={236} ml={78} fs={38} ff={`"Liberation Serif", serif`}>Times New Roman</Fit>
            <Fit w={169} ml={201} fs={34} b={900} ff={`Broadway, Lato, "Liberation Sans", sans-serif`}><Heavy $s={1.4} $ls={1}>Broadway</Heavy></Fit>
          </Line>
          <Line $h={66} $fs={35}>
            <Fit w={60} ml={219}>Arial</Fit>
            <Fit w={216} ml={49} fs={35} b={500} ff={`"Comic Sans MS", "Comic Neue", "Open Sans", sans-serif`}>Comic Sans MS</Fit>
            <Fit w={208} ml={113} fs={33} i ff={`"Lucida Calligraphy", "Liberation Serif", serif`}>Lucida Calligraphy</Fit>
          </Line>
          <Line $h={66} $fs={35}>
            <Fit w={60} ml={219} fs={31} i ff={`Chiller, "Liberation Serif", serif`}>Chiller</Fit>
            <Fit w={141} ml={50} fs={37} b={700} ff={`Elephant, "Liberation Serif", serif`}><Heavy $s={0.9}>Elephant</Heavy></Fit>
            <Fit w={392} ml={81} fs={35} b={700} ff={`"Goudy Stout", "DejaVu Serif", serif`}><Heavy $s={2.2} $ls={5}>GOUDY STOUT</Heavy></Fit>
          </Line>
          <Line $h={70} $fs={52} $mt={42}><Fit w={508} ml={250}>Ways to format your font:</Fit></Line>
          <Line $h={78} $fs={44} $mt={10}>
            <Fit w={154} ml={302}>Add <Ink $c="#f0131a">c</Ink><Ink $c="#cfcdd0">o</Ink><Ink $c="#f5cf2c">l</Ink><Ink $c="#cfcdd0">o</Ink><Ink $c="#0f9a34">r</Ink></Fit>
            <Fit w={176} ml={75}>Make <b>bold</b></Fit>
          </Line>
          <Line $h={78} $fs={44}>
            <Fit w={156} ml={334}><Underlined>Underline</Underlined></Fit>
            <Fit w={121} ml={65} i>Italicize</Fit>
          </Line>
        </Card>
      </Body>
    </Slide>
  );
}
